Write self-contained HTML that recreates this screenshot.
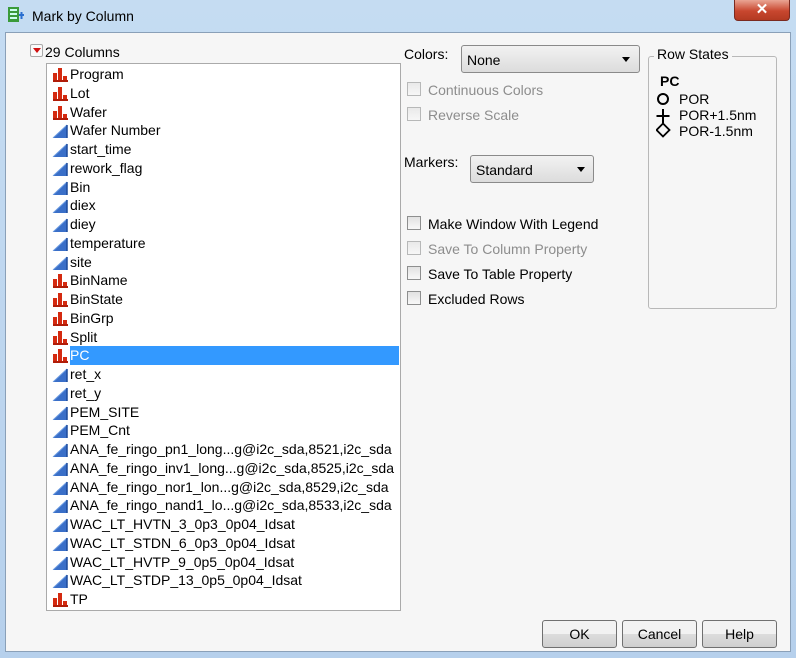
<!DOCTYPE html><html><head><style>
body{margin:0;width:796px;height:658px;overflow:hidden;background:linear-gradient(#c5dcf2,#b6d0ec);font-family:"Liberation Sans",sans-serif;font-size:14px;color:#000;position:relative}
.a{position:absolute;white-space:nowrap}
#client{position:absolute;left:5px;top:32px;width:786px;height:620px;background:#f6f6f6;border:1px solid #8aa0b8;box-sizing:border-box}
#list{position:absolute;left:46px;top:63px;width:355px;height:548px;background:#fff;border:1px solid #aaa;box-sizing:border-box}
.r{position:absolute;left:4px;height:19px;line-height:19px;width:348px}
.r span{position:absolute;left:19px}
.sel span{background:#3399ff;color:#fff;width:329px;padding-left:0}
.n{position:absolute;left:1px;top:2px;width:16px;height:15px}
.cb{position:absolute;width:14px;height:14px;border:1px solid #8e8f8f;background:linear-gradient(#e2e2e2,#f8f8f8);box-sizing:border-box}
.dis{color:#8d8d8d}
.dd{position:absolute;border:1px solid #8a8a8a;border-radius:3px;background:linear-gradient(#f2f2f2,#dcdcdc);box-sizing:border-box}
.btn{position:absolute;top:620px;height:28px;width:75px;border:1px solid #707070;border-radius:3px;background:linear-gradient(#f2f2f2 50%,#dddddd 50%,#cfcfcf);box-sizing:border-box;text-align:center;line-height:26px}
</style></head><body>
<svg class="a" style="left:7px;top:6px" width="18" height="18"><rect x="1" y="1" width="11" height="15" fill="#3a9b3a"/><rect x="3" y="3" width="7" height="2" fill="#cfe"/><rect x="3" y="7" width="7" height="2" fill="#cfe"/><rect x="3" y="11" width="7" height="2" fill="#cfe"/><path d="M12 9 L17 9 M14.5 6 L14.5 13" stroke="#2a6fd0" stroke-width="2"/></svg>
<div class="a" style="left:32px;top:8px;font-size:14px">Mark by Column</div>
<div class="a" style="left:734px;top:0;width:56px;height:21px;border:1px solid #7a2a20;border-top:none;border-radius:0 0 4px 4px;background:linear-gradient(#e9a594,#c8472f 55%,#b33a22);box-sizing:border-box;color:#fff;text-align:center;font-weight:bold;font-size:15px;line-height:19px">✕</div>
<div id="client"></div>
<div class="a" style="left:30px;top:44px;width:13px;height:13px;border:1px solid #aaa;border-radius:2px;background:#fafafa;box-sizing:border-box"><div style="position:absolute;left:2px;top:3px;border-left:4px solid transparent;border-right:4px solid transparent;border-top:5px solid #d01010"></div></div>
<div class="a" style="left:45px;top:44px">29 Columns</div>
<div id="list"></div>
<script>
var rows=[["Program",0],["Lot",0],["Wafer",0],["Wafer Number",1],["start_time",1],["rework_flag",1],["Bin",1],["diex",1],["diey",1],["temperature",1],["site",1],["BinName",0],["BinState",0],["BinGrp",0],["Split",0],["PC",0],["ret_x",1],["ret_y",1],["PEM_SITE",1],["PEM_Cnt",1],["ANA_fe_ringo_pn1_long...g@i2c_sda,8521,i2c_sda",1],["ANA_fe_ringo_inv1_long...g@i2c_sda,8525,i2c_sda",1],["ANA_fe_ringo_nor1_lon...g@i2c_sda,8529,i2c_sda",1],["ANA_fe_ringo_nand1_lo...g@i2c_sda,8533,i2c_sda",1],["WAC_LT_HVTN_3_0p3_0p04_Idsat",1],["WAC_LT_STDN_6_0p3_0p04_Idsat",1],["WAC_LT_HVTP_9_0p5_0p04_Idsat",1],["WAC_LT_STDP_13_0p5_0p04_Idsat",1],["TP",0]];
var h="";rows.forEach(function(r,i){var ic=r[1]?'<svg class="n" viewBox="0 0 16 15"><path d="M1 15 L15 2 L15 15Z" fill="#3a6fc8"/><path d="M1 15 L15 2" stroke="#6a9ae0" stroke-width="1"/><path d="M15 2 L15 15" stroke="#1c4a9a" stroke-width="1.5"/></svg>':'<svg class="n" viewBox="0 0 16 15"><rect x="1" y="6" width="4" height="9" fill="#d42a10"/><rect x="6" y="1" width="4" height="14" fill="#d42a10"/><rect x="11" y="9" width="4" height="6" fill="#d42a10"/><rect x="1" y="13" width="15" height="2" fill="#b01c08"/></svg>';
h+='<div class="r'+(r[0]=="PC"?" sel":"")+'" style="top:'+(1+i*18.75)+'px">'+ic+'<span>'+r[0]+'</span></div>'});document.getElementById("list").innerHTML=h;
</script>
<div class="a" style="left:404px;top:46px">Colors:</div>
<div class="dd" style="left:461px;top:45px;width:179px;height:28px"><span class="a" style="left:5px;top:6px">None</span><div class="a" style="left:160px;top:11px;border-left:4px solid transparent;border-right:4px solid transparent;border-top:5px solid #000"></div></div>
<div class="cb" style="left:407px;top:82px;opacity:.6"></div><div class="a dis" style="left:428px;top:82px">Continuous Colors</div>
<div class="cb" style="left:407px;top:107px;opacity:.6"></div><div class="a dis" style="left:428px;top:107px">Reverse Scale</div>
<div class="a" style="left:404px;top:154px">Markers:</div>
<div class="dd" style="left:470px;top:155px;width:124px;height:28px"><span class="a" style="left:5px;top:6px">Standard</span><div class="a" style="left:106px;top:11px;border-left:4px solid transparent;border-right:4px solid transparent;border-top:5px solid #000"></div></div>
<div class="cb" style="left:407px;top:216px"></div><div class="a" style="left:428px;top:216px">Make Window With Legend</div>
<div class="cb" style="left:407px;top:241px;opacity:.6"></div><div class="a dis" style="left:428px;top:241px">Save To Column Property</div>
<div class="cb" style="left:407px;top:266px"></div><div class="a" style="left:428px;top:266px">Save To Table Property</div>
<div class="cb" style="left:407px;top:291px"></div><div class="a" style="left:428px;top:291px">Excluded Rows</div>
<div class="a" style="left:648px;top:56px;width:129px;height:253px;border:1px solid #b8b8b8;border-radius:3px;box-sizing:border-box"></div>
<div class="a" style="left:654px;top:46px;background:#f6f6f6;padding:0 3px">Row States</div>
<div class="a" style="left:660px;top:73px;font-weight:bold">PC</div>
<svg class="a" style="left:656px;top:90px" width="20" height="50"><circle cx="7" cy="9" r="5" fill="none" stroke="#000" stroke-width="2"/><path d="M7 19 V33 M0.5 26 H13.5" stroke="#000" stroke-width="2"/><path d="M7 33.5 L13.5 40 L7 46.5 L0.5 40Z" fill="none" stroke="#000" stroke-width="1.8"/></svg>
<div class="a" style="left:679px;top:91px">POR</div>
<div class="a" style="left:679px;top:107px">POR+1.5nm</div>
<div class="a" style="left:679px;top:123px">POR-1.5nm</div>
<div class="btn" style="left:542px">OK</div>
<div class="btn" style="left:622px">Cancel</div>
<div class="btn" style="left:702px">Help</div>
</body></html>
